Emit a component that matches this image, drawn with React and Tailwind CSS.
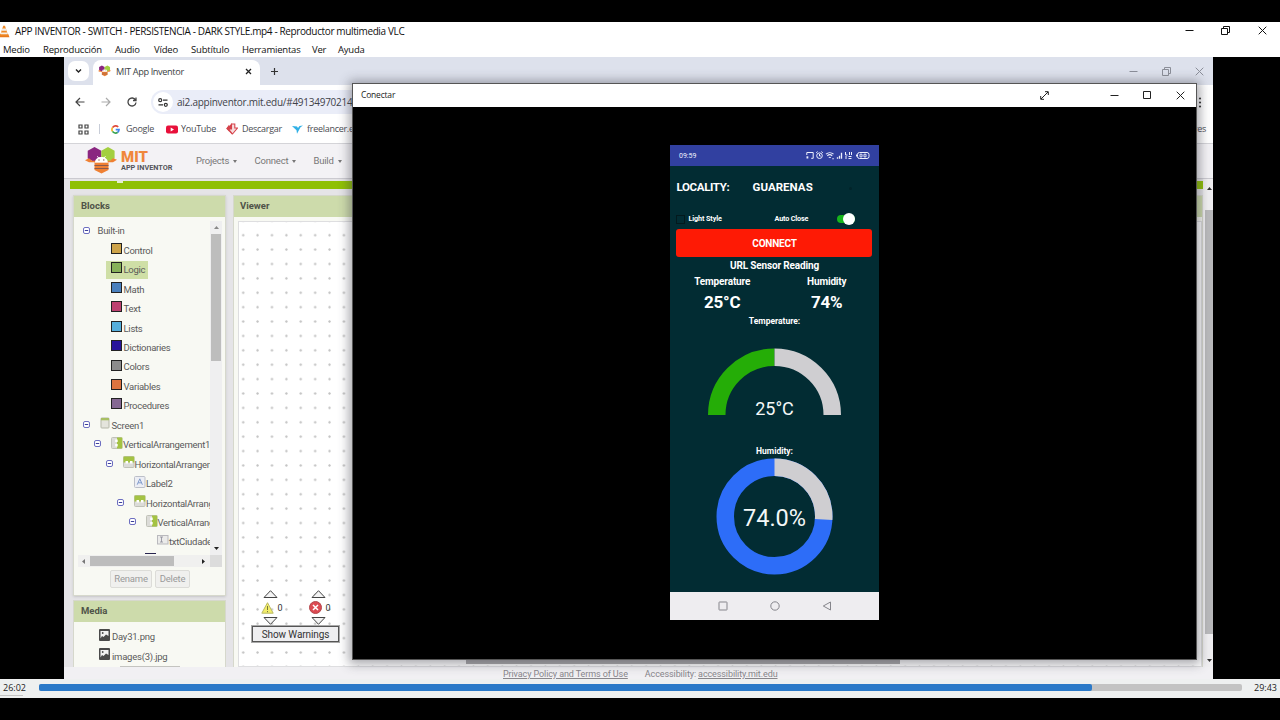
import { clsx } from 'clsx';

const menuItems = [
  { label: 'Medio', width: 'w-[40px]' },
  { label: 'Reproducción', width: 'w-[72px]' },
  { label: 'Audio', width: 'w-[39px]' },
  { label: 'Vídeo', width: 'w-[37px]' },
  { label: 'Subtítulo', width: 'w-[51px]' },
  { label: 'Herramientas', width: 'w-[70px]' },
  { label: 'Ver', width: 'w-[26px]' },
  { label: 'Ayuda', width: 'w-[30px]' },
];

const treeRows = [
  { label: 'Built-in', depth: 0, toggle: true },
  { label: 'Control', depth: 1, color: '#cda349' },
  { label: 'Logic', depth: 1, color: '#86b159', selected: true },
  { label: 'Math', depth: 1, color: '#4a80bd' },
  { label: 'Text', depth: 1, color: '#bc4170' },
  { label: 'Lists', depth: 1, color: '#55aedb' },
  { label: 'Dictionaries', depth: 1, color: '#28149a' },
  { label: 'Colors', depth: 1, color: '#8c8c8c' },
  { label: 'Variables', depth: 1, color: '#dd7440' },
  { label: 'Procedures', depth: 1, color: '#856892' },
  { label: 'Screen1', depth: 0, toggle: true, icon: 'screen' },
  { label: 'VerticalArrangement1', depth: 1, toggle: true, icon: 'vertical' },
  { label: 'HorizontalArrangement1', depth: 2, toggle: true, icon: 'horizontal' },
  { label: 'Label2', depth: 3, icon: 'label' },
  { label: 'HorizontalArrangement2', depth: 3, toggle: true, icon: 'horizontal' },
  { label: 'VerticalArrangement2', depth: 4, toggle: true, icon: 'vertical' },
  { label: 'txtCiudades', depth: 5, icon: 'textbox' },
];

function VlcCone() {
  return (
    <svg className="h-[13px] w-[10px] shrink-0" viewBox="0 0 10 13">
      <path d="M-1 9h9.200l1.300 3.200H-2z" fill="#e8791b" />
      <path d="M3.200 0.800h1.800l3.200 10H0z" fill="#f08a26" />
      <path d="M2.300 3.600h3.600l.8 2.200H1.600z" fill="#f4efe9" />
      <path d="M1 7.600h6.200l.6 1.600H.4z" fill="#f4efe9" />
    </svg>
  );
}

function Minimize({ className }) {
  return (
    <svg className={clsx('h-[11px] w-[11px]', className)} viewBox="0 0 11 11" fill="none" stroke="currentColor">
      <path d="M1.5 5.5h8" />
    </svg>
  );
}

function Restore({ className }) {
  return (
    <svg className={clsx('h-[11px] w-[11px]', className)} viewBox="0 0 11 11" fill="none" stroke="currentColor">
      <path d="M1.500 3.500h6v6h-6zM3.500 3.500v-2h6v6h-2" />
    </svg>
  );
}

function Cross({ className }) {
  return (
    <svg className={clsx('h-[11px] w-[11px]', className)} viewBox="0 0 11 11" fill="none" stroke="currentColor">
      <path d="M1.7 1.7l7.6 7.6M9.3 1.7L1.7 9.3" />
    </svg>
  );
}

function AppInventorLogo({ className }) {
  return (
    <svg className={className} viewBox="0 0 32 27">
      <path d="M9.5 0l6.8 3.7v7.8l-6.8 3.7-6.8-3.7V3.7z" fill="#8a2680" />
      <path d="M23 0l6.6 3.7v7.8L23 15.2l-6.7-3.7V3.7z" fill="#a3cf3f" />
      <path d="M0 13.3l4-2 3 2.500h18l3-2.500 4 1.500-4 2.400H4z" fill="#ef8033" />
      <path d="M9.500 15.500h14v7.500l-7 3.600-7-3.600z" fill="#ef8033" />
      <path d="M9.500 18.500h14M9.500 21.500h14" stroke="#8b5a4c" strokeWidth="1.1" />
      <path d="M10 15.500c0-3.400 2.800-5.400 6.400-5.400s6.400 2 6.400 5.400z" fill="#fff" />
      <path d="M12.300 9.200l1.500 2M20.500 9.200l-1.500 2" stroke="#fff" strokeWidth="0.9" />
      <circle cx="14" cy="13" r="0.7" fill="#8b5a4c" />
      <circle cx="18.8" cy="13" r="0.7" fill="#8b5a4c" />
    </svg>
  );
}

function BrowserTabs() {
  return (
    <div className="flex h-[28px] shrink-0 items-start bg-[#dde1ec] text-[#3c3f44]">
      <div className="mt-[4px] ml-[4px] flex h-[20px] w-[21px] items-center justify-center rounded-[7px] bg-white">
        <svg className="h-[6px] w-[7px]" viewBox="0 0 7 6" fill="none" stroke="#222" strokeWidth="1.4">
          <path d="M1 1.500l2.500 2.500L6 1.500" />
        </svg>
      </div>
      <div className="mt-[3px] ml-[4px] flex h-[25px] w-[167px] items-center rounded-t-[8px] bg-white pb-[2px] pl-[5px]">
        <AppInventorLogo className="mb-[2px] h-[12px] w-[13px]" />
        <span className="ml-[5px] w-[129px] font-['Open_Sans'] text-[9.2px] tracking-[-0.38px] whitespace-nowrap">MIT App Inventor</span>
        <svg className="h-[7px] w-[7px] shrink-0" viewBox="0 0 7 7" fill="none" stroke="#222" strokeWidth="1.3">
          <path d="M1 1l5 5M6 1L1 6" />
        </svg>
      </div>
      <svg className="mt-[10px] ml-[10px] h-[9px] w-[9px]" viewBox="0 0 9 9" fill="none" stroke="#333" strokeWidth="1.2">
        <path d="M4.500 1v7M1 4.500h7" />
      </svg>
      <div className="mt-[9px] mr-[8px] ml-auto flex gap-[22px] text-[#8b8e98]">
        <Minimize />
        <Restore />
        <Cross />
      </div>
    </div>
  );
}

function AddressBar() {
  return (
    <div className="flex h-[34px] shrink-0 items-center bg-white">
      <svg className="ml-[11px] h-[10px] w-[10px]" viewBox="0 0 10 10" fill="none" stroke="#444" strokeWidth="1.2">
        <path d="M9.500 5H1M5 1L1 5l4 4" />
      </svg>
      <svg className="ml-[16px] h-[10px] w-[10px]" viewBox="0 0 10 10" fill="none" stroke="#aaa" strokeWidth="1.2">
        <path d="M.5 5H9M5 1l4 4-4 4" />
      </svg>
      <svg className="ml-[16px] h-[10px] w-[10px]" viewBox="0 0 10 10" fill="none" stroke="#444" strokeWidth="1.3">
        <path d="M8.500 3A4 4 0 1 0 9 5.500M9 .5v3H6" />
      </svg>
      <div className="ml-[14px] flex h-[24px] w-[870px] items-center rounded-full bg-[#eaedf8] pl-[2px]">
        <div className="flex h-[20px] w-[20px] items-center justify-center rounded-full bg-white">
          <svg className="h-[9px] w-[10px]" viewBox="0 0 10 9" fill="none" stroke="#333" strokeWidth="1.2">
            <circle cx="2.2" cy="2.2" r="1.5" />
            <path d="M5 2.200h4.500M.5 6.800H5" />
            <circle cx="7.8" cy="6.8" r="1.5" />
          </svg>
        </div>
        <span className="ml-[4px] font-['Open_Sans'] text-[10px] tracking-[-0.26px] whitespace-nowrap text-[#3f4249]">
          ai2.appinventor.mit.edu/#49134970214
        </span>
      </div>
      <svg className="mr-[11px] ml-auto h-[11px] w-[4px]" viewBox="0 0 4 11" fill="#333">
        <circle cx="2" cy="1.5" r="1.1" />
        <circle cx="2" cy="5.5" r="1.1" />
        <circle cx="2" cy="9.5" r="1.1" />
      </svg>
    </div>
  );
}

function BookmarksBar() {
  return (
    <div className="flex h-[25px] shrink-0 items-center border-b border-[#d4d4d8] bg-white pb-[4px] font-['Open_Sans'] text-[9px] tracking-[-0.28px] text-[#4a4c52]">
      <svg className="ml-[14px] h-[11px] w-[11px] shrink-0" viewBox="0 0 11 11" fill="none" stroke="#444" strokeWidth="1.2">
        <path d="M1 1h3v3H1zM7 1h3v3H7zM1 7h3v3H1zM7 7h3v3H7z" />
      </svg>
      <div className="ml-[10px] h-[10px] w-px bg-[#c8cdd8]" />
      <svg className="ml-[11px] h-[9px] w-[9px] shrink-0" viewBox="0 0 9 9" fill="none" strokeWidth="1.7">
        <path d="M7.200 2A3.600 3.600 0 0 0 1.500 2.600" stroke="#e04a3a" />
        <path d="M1.500 2.600a3.600 3.600 0 0 0 0 3.800" stroke="#f2b72c" />
        <path d="M1.500 6.400a3.600 3.600 0 0 0 5.200.9" stroke="#38a350" />
        <path d="M6.700 7.300a3.600 3.600 0 0 0 1.300-2.600H4.700" stroke="#4284ec" />
      </svg>
      <span className="ml-[6px] w-[40px]">Google</span>
      <svg className="h-[9px] w-[12px] shrink-0" viewBox="0 0 12 9">
        <rect y="0.5" width="12" height="8" rx="2" fill="#e8103a" />
        <path d="M4.700 2.600v3.800L8 4.500z" fill="#fff" />
      </svg>
      <span className="ml-[3px] w-[45px]">YouTube</span>
      <svg className="h-[12px] w-[12px] shrink-0" viewBox="0 0 12 12">
        <path d="M6 .2L.3 5.500 6 11.600z" fill="#d5434b" />
        <path d="M5.500 1h3.300v4h2.700L6.500 11 2.500 6h3z" fill="#f6dcdd" stroke="#d5434b" strokeWidth="1.1" />
        <path d="M3 1.800L.3 5.500l3 3.200z" fill="#d5434b" />
      </svg>
      <span className="ml-[4px] w-[50px]">Descargar</span>
      <svg className="h-[9px] w-[11px] shrink-0" viewBox="0 0 11 9" fill="#2fb0e6">
        <path d="M0 1l5 .5L6 3l1.500-2 3.500-.4-2.500 1.600L5 8.700l-.5-3.500z" />
      </svg>
      <span className="ml-[4px]">freelancer.es</span>
      <span className="mr-[7px] ml-auto">Todos los marcadores</span>
    </div>
  );
}

function AppHeader() {
  const menus = [
    { label: 'Projects', width: 'w-[58.5px]' },
    { label: 'Connect', width: 'w-[59px]' },
    { label: 'Build', width: 'w-[40px]' },
  ];

  return (
    <div className="flex h-[35px] shrink-0 items-center border-b border-[#cbcad0] bg-[#f3f2f5]">
      <AppInventorLogo className="mb-[1px] ml-[21px] h-[27px] w-[32px]" />
      <div className="ml-[4px] flex w-[75px] flex-col font-['Roboto']">
        <span className="text-[15px] leading-[12px] font-black text-[#f0873c]">MIT</span>
        <span className="text-[7.3px] leading-[9px] font-bold whitespace-nowrap text-[#55555a]">APP INVENTOR</span>
      </div>
      {menus.map((menu) => (
        <div
          key={menu.label}
          className={clsx('flex items-center gap-[4px] font-["Roboto"] text-[9.5px] tracking-[-0.2px] text-[#777]', menu.width)}
        >
          {menu.label}
          <svg className="h-[3px] w-[4px]" viewBox="0 0 4 3" fill="#777">
            <path d="M0 0h4L2 3z" />
          </svg>
        </div>
      ))}
    </div>
  );
}

function Toggle() {
  return (
    <svg className="mb-[2px] h-[7px] w-[7px] shrink-0" viewBox="0 0 7 7" fill="#fff" stroke="#6d6fc0">
      <rect x="0.5" y="0.5" width="6" height="6" rx="1.5" />
      <path d="M1.800 3.500h3.400" stroke="#3d409a" />
    </svg>
  );
}

function ComponentIcon({ type }) {
  return (
    <svg className="mb-[4px] h-[12px] w-[12px] shrink-0" viewBox="0 0 12 12">
      {type === 'screen' ? (
        <>
          <rect x="1" y="1" width="8" height="10" rx="0.8" fill="#e4e4dc" stroke="#b5b7a8" />
          <path d="M1 1h8v2.300H1z" fill="#a8bf63" />
        </>
      ) : null}
      {type === 'vertical' ? (
        <>
          <rect x="0.5" y="0.5" width="10.5" height="11" rx="1" fill="#dcdcd8" stroke="#c0c2b8" />
          <path d="M6 .5h5.300v11H6z" fill="#a4c343" />
          <path d="M4.200 2.500h2.500v2.500H4.200zM4.200 7h2.500v2.500H4.200z" fill="#fff" />
        </>
      ) : null}
      {type === 'horizontal' ? (
        <>
          <rect x="0.5" y="0.5" width="10.5" height="11" rx="1" fill="#dcdcd8" stroke="#c0c2b8" />
          <path d="M.5.5h10.800v6H.5z" fill="#a4c343" />
          <path d="M2.500 5h2.500v2.500H2.500zM7 5h2.500v2.500H7z" fill="#fff" />
        </>
      ) : null}
      {type === 'label' ? (
        <>
          <rect x="0.5" y="0.5" width="10.5" height="11" rx="1" fill="#eceef4" stroke="#bcbfc8" />
          <path d="M3.200 8.700L5.800 2.800l2.600 5.900M4.200 6.800h3.200" fill="none" stroke="#7f9acb" />
        </>
      ) : null}
      {type === 'textbox' ? (
        <>
          <rect x="0.5" y="1.5" width="10.5" height="8.5" fill="#ebebea" stroke="#b9b9bd" />
          <path d="M3 3h3M4.500 3v5M3 8h3" fill="none" stroke="#8a8a98" strokeWidth="0.8" />
        </>
      ) : null}
    </svg>
  );
}

function TreeRow({ row }) {
  return (
    <div className="flex h-[19.45px] items-center" style={{ paddingLeft: 4.5 + row.depth * 11.5 }}>
      {row.toggle ? <Toggle /> : null}
      <div
        className={clsx(
          'flex h-[18px] items-center',
          !row.toggle && 'ml-[12px] pl-[5px]',
          row.toggle && row.icon && 'ml-[10px]',
          row.toggle && !row.icon && 'ml-[8px]',
          row.selected && 'bg-[#cfdfa6] pr-[3px]',
        )}
      >
        {row.color ? (
          <span className="mr-[2px] mb-[4px] h-[11px] w-[10.5px] shrink-0 border border-[#222]" style={{ background: row.color }} />
        ) : null}
        {row.icon ? <ComponentIcon type={row.icon} /> : null}
        <span className="pt-[1px] whitespace-nowrap">{row.label}</span>
      </div>
    </div>
  );
}

function BlocksPanel() {
  return (
    <div className="flex h-[401px] shrink-0 flex-col border border-[#d6d8cc] bg-[#f8f9f3] shadow-sm">
      <div className="flex h-[21px] shrink-0 items-center bg-[#cddbab] pl-[7px] text-[9.5px] font-bold text-[#4f5348]">Blocks</div>
      <div className="mt-[4px] ml-[4px] flex h-[334px] shrink-0">
        <div className="w-[132px] overflow-hidden pt-[0.3px] text-[9.5px] tracking-[-0.27px] text-[#5a5a5a]">
          {treeRows.map((row) => (
            <TreeRow key={row.label} row={row} />
          ))}
          <div className="mt-[1px] ml-[67px] h-[1.5px] w-[11px] bg-[#28244e]" />
        </div>
        <div className="flex w-[12px] flex-col items-center bg-[#efeff0]">
          <svg className="my-[5px] h-[3px] w-[5px] shrink-0" viewBox="0 0 5 3" fill="#888">
            <path d="M0 3h5L2.500 0z" />
          </svg>
          <div className="h-[127px] w-[10px] shrink-0 bg-[#bdbdbd]" />
          <svg className="mt-auto mb-[5px] h-[3px] w-[5px] shrink-0" viewBox="0 0 5 3" fill="#222">
            <path d="M0 0h5L2.500 3z" />
          </svg>
        </div>
      </div>
      <div className="ml-[4px] flex h-[12px] w-[144px] shrink-0 items-center bg-[#f0f0ef]">
        <svg className="ml-[4px] h-[5px] w-[3px]" viewBox="0 0 3 5" fill="#777">
          <path d="M3 0v5L0 2.500z" />
        </svg>
        <div className="ml-[5px] h-[10px] w-[84px] bg-[#bdbdbd]" />
        <svg className="ml-[28px] h-[5px] w-[3px]" viewBox="0 0 3 5" fill="#222">
          <path d="M0 0v5l3-2.500z" />
        </svg>
        <div className="ml-auto h-[12px] w-[12px] bg-[#dcdcdc]" />
      </div>
      <div className="mt-[3px] ml-[36px] flex gap-[3px] text-[9.5px] tracking-[-0.2px] text-[#9a9a9a]">
        <div className="flex h-[18px] w-[42px] items-center justify-center rounded-[2px] border border-[#dcdcd8] bg-[#f0f0ee]">Rename</div>
        <div className="flex h-[18px] w-[35px] items-center justify-center rounded-[2px] border border-[#dcdcd8] bg-[#f0f0ee]">Delete</div>
      </div>
    </div>
  );
}

function MediaPanel() {
  return (
    <div className="mt-[4px] flex h-[67px] shrink-0 flex-col overflow-hidden border border-b-0 border-[#d6d8cc] bg-[#f8f9f3]">
      <div className="flex h-[21px] shrink-0 items-center bg-[#cddbab] pl-[7px] text-[9.5px] font-bold text-[#4f5348]">Media</div>
      <div className="mt-[5px] ml-[25px] shrink-0 text-[9.5px] tracking-[-0.23px] text-[#5a5a5a]">
        {['Day31.png', 'images(3).jpg'].map((file) => (
          <div key={file} className="flex h-[19.5px] items-center">
            <svg className="mr-[2px] mb-[4px] h-[12px] w-[11px]" viewBox="0 0 11 12">
              <rect width="11" height="12" rx="1" fill="#4a4a4a" />
              <path d="M1.500 9.500V2h8v5L7 5.500 4.500 8 3 7z" fill="#f2f2f2" />
              <circle cx="3.7" cy="4" r="0.9" fill="#4a4a4a" />
            </svg>
            <span className="pt-[1px]">{file}</span>
          </div>
        ))}
      </div>
      <div className="ml-[46px] h-px w-[60px] shrink-0 bg-[#c4c4c0]" />
    </div>
  );
}

function WarningCounter({ type }) {
  return (
    <div className="flex w-[21px] flex-col items-center text-[9px] text-[#333]">
      <svg className="h-[8px] w-[15px]" viewBox="0 0 15 8" fill="#f4f4f4" stroke="#444">
        <path d="M1 7.500h13L7.500.7z" />
      </svg>
      <div className="my-[3px] ml-[4px] flex h-[13px] items-center gap-[3px]">
        {type === 'warning' ? (
          <svg className="h-[12px] w-[13px]" viewBox="0 0 13 12">
            <path d="M6.500.7l5.700 10.500H.8z" fill="#f3ee6a" stroke="#b9b864" />
            <path d="M6.500 4v4M6.500 9v1.200" stroke="#77763c" />
          </svg>
        ) : (
          <svg className="h-[13px] w-[13px]" viewBox="0 0 13 13">
            <circle cx="6.5" cy="6.5" r="6" fill="#dc4a52" stroke="#b4474c" />
            <path d="M4 4l5 5M9 4L4 9" stroke="#fff" strokeWidth="1.5" />
          </svg>
        )}
        <span className="pt-[2px]">0</span>
      </div>
      <svg className="h-[8px] w-[15px]" viewBox="0 0 15 8" fill="#f4f4f4" stroke="#444">
        <path d="M1 .5h13L7.500 7.300z" />
      </svg>
    </div>
  );
}

function Viewer() {
  return (
    <div className="mt-[6px] ml-[7px] flex flex-1 flex-col border border-b-0 border-[#d6d8cc] bg-[#f8f9f3]">
      <div className="flex h-[21px] shrink-0 items-center bg-[#cddbab] pl-[6px] text-[9.5px] font-bold text-[#4f5348]">Viewer</div>
      <div className="mt-[4px] ml-[4px] flex flex-1 flex-col justify-end border border-[#dedee0] bg-white bg-[radial-gradient(circle,#c2c2c2_0.8px,transparent_1.5px)] bg-size-[14.4px_14.4px] bg-position-[-3px_6px] pb-[24px] pl-[13px]">
        <div className="mb-[1px] flex gap-[27px] pl-[7.5px]">
          <WarningCounter type="warning" />
          <WarningCounter type="error" />
        </div>
        <div className="flex h-[16px] w-[87px] items-center justify-center border border-[#555] bg-[#eeeef0] text-[10px] tracking-[-0.1px] text-[#333] outline outline-[#aaa]">
          Show Warnings
        </div>
      </div>
    </div>
  );
}

function Workspace() {
  return (
    <div className="flex h-[488px] shrink-0 bg-[#e5e4e7] font-['Roboto']">
      <div className="flex w-[1139px] flex-col pl-[6px]">
        <div className="mt-[2px] flex h-[8px] shrink-0 bg-[#8fc005]">
          <div className="ml-[47px] h-[2px] w-[6px] bg-[#e5f0cc]" />
        </div>
        <div className="flex min-h-0 flex-1">
          <div className="mt-[6px] ml-[3px] flex w-[153px] flex-col">
            <BlocksPanel />
            <MediaPanel />
          </div>
          <Viewer />
        </div>
      </div>
      <div className="flex flex-1 flex-col items-end bg-[#f0eff1]">
        <svg className="mt-[8px] mr-[1px] h-[3px] w-[5px]" viewBox="0 0 5 3" fill="#333">
          <path d="M0 3h5L2.500 0z" />
        </svg>
        <div className="mt-[20px] h-[424px] w-[8px] bg-[#b9b9bb]" />
        <svg className="mt-auto mr-[1px] mb-[5px] h-[3px] w-[5px]" viewBox="0 0 5 3" fill="#333">
          <path d="M0 0h5L2.500 3z" />
        </svg>
      </div>
    </div>
  );
}

function StatusIcons() {
  return (
    <svg className="h-[9px] w-[64px]" viewBox="0 0 64 9" fill="none" stroke="#eef0fc">
      <path d="M.8 4V1.500h6.400V7.300H5.200" />
      <path d="M.5 5.300h1.800v2.200H.5z" fill="#eef0fc" stroke="none" />
      <path d="M10.200 1.700l1.500-1.100M16.800 1.700l-1.500-1.100M13.500 3v2h1.300" />
      <circle cx="13.5" cy="4.7" r="2.8" />
      <path d="M20 3.200a5.500 5.500 0 0 1 7.500 0M21.300 4.900a3.500 3.500 0 0 1 4.900 0M22.800 6.700a1.500 1.500 0 0 1 2 0M26.300 7.700h1.500" strokeWidth="1.1" />
      <path d="M31.500 7.700V6.200M33.500 7.700V4.700M35.500 7.700V1.700" strokeWidth="1.3" />
      <path d="M39.500 1v3h2M43.500 1v3M45.500 1v3M40 5v3M42.500 5.500h3M42.500 7.500h3" />
      <rect x="51.500" y="1.500" width="11.500" height="6" rx="2" />
      <path d="M50.500 3.500v2" />
      <path d="M54 3.200v2.700h2V3.200zM58 3.200v2.700h2V3.200z" strokeWidth="0.9" />
    </svg>
  );
}

function Phone() {
  return (
    <div className="mt-[38px] ml-[317px] flex h-[475px] w-[209px] flex-col bg-[#022c33] font-['Roboto'] text-white">
      <div className="flex h-[21px] shrink-0 items-center justify-between bg-[#3140a0] pr-[9px] pl-[9px] text-[7px] text-[#f0f2fc]">
        <span className="pt-[1px]">09:59</span>
        <StatusIcons />
      </div>
      <div className="flex h-[43px] shrink-0 items-center pt-[1px] pl-[6.5px] font-bold">
        <span className="w-[76px] text-[11.5px] tracking-[-0.35px]">LOCALITY:</span>
        <span className="w-[96px] text-[11.5px] tracking-[0.05px]">GUARENAS</span>
        <span className="h-[3px] w-[3px] rounded-full bg-[#02242a]" />
      </div>
      <div className="flex h-[20px] shrink-0 items-center pl-[5.5px] text-[7.2px] font-bold">
        <span className="mr-[4px] h-[9px] w-[9px] border border-[#03191d]" />
        <span className="w-[86px] tracking-[-0.1px]">Light Style</span>
        <span className="w-[62.5px] tracking-[-0.15px]">Auto Close</span>
        <div className="flex h-[8px] w-[18px] items-center justify-end rounded-full bg-[#17b51c]">
          <div className="h-[12px] w-[12px] shrink-0 rounded-full bg-white" />
        </div>
      </div>
      <div className="mr-[7px] ml-[6px] flex h-[28px] shrink-0 items-center justify-center rounded-[3px] bg-[#fe1a05] pl-[1px] text-[10px] font-bold tracking-[-0.2px]">
        CONNECT
      </div>
      <div className="flex h-[16px] shrink-0 items-center justify-center text-[10px] font-bold tracking-[-0.15px]">URL Sensor Reading</div>
      <div className="grid h-[16px] shrink-0 grid-cols-2 items-center text-center text-[10px] font-bold tracking-[-0.15px]">
        <span>Temperature</span>
        <span>Humidity</span>
      </div>
      <div className="grid h-[26px] shrink-0 grid-cols-2 items-center pt-[1px] text-center text-[17px] font-bold tracking-[-0.2px]">
        <span>25°C</span>
        <span>74%</span>
      </div>
      <div className="flex h-[13px] shrink-0 items-center justify-center text-[8.5px] font-bold">Temperature:</div>
      <svg className="h-[118px] w-[209px] shrink-0" viewBox="0 0 209 118" fill="none" strokeWidth="17.5">
        <path d="M46.750 87A57.750 57.750 0 0 1 104.500 29.250" stroke="#25ad07" />
        <path d="M104.500 29.250A57.750 57.750 0 0 1 162.250 87" stroke="#cfced1" />
        <text x="104.5" y="87" textAnchor="middle" fontSize="18" fill="#f4f8f8" stroke="none">
          25°C
        </text>
      </svg>
      <div className="flex h-[11px] shrink-0 items-center justify-center text-[8.5px] font-bold">Humidity:</div>
      <svg className="h-[135px] w-[209px] shrink-0" viewBox="0 0 209 135" fill="none" strokeWidth="17.5">
        <circle cx="104.5" cy="59.5" r="49.25" stroke="#2d6df8" />
        <circle
          cx="104.5"
          cy="59.5"
          r="49.25"
          stroke="#cfced1"
          pathLength="100"
          strokeDasharray="26 74"
          transform="rotate(-90 104.5 59.5)"
        />
        <text x="104.5" y="69" textAnchor="middle" fontSize="23.5" fill="#f4f8f8" stroke="none">
          74.0%
        </text>
      </svg>
      <div className="flex flex-1 items-center justify-center gap-[42px] bg-[#eeedf0] text-[#85858b]">
        <svg className="h-[10px] w-[10px]" viewBox="0 0 10 10" fill="none" stroke="currentColor">
          <rect x="1" y="1" width="8" height="8" rx="0.5" />
        </svg>
        <svg className="h-[10px] w-[10px]" viewBox="0 0 10 10" fill="none" stroke="currentColor">
          <circle cx="5" cy="5" r="4.2" />
        </svg>
        <svg className="h-[10px] w-[10px]" viewBox="0 0 10 10" fill="none" stroke="currentColor">
          <path d="M8.500 1v8L1.300 5z" strokeLinejoin="round" />
        </svg>
      </div>
    </div>
  );
}

function ConectarWindow() {
  return (
    <div className="absolute top-[26px] left-[288px] flex h-[577px] w-[845px] flex-col border border-[#555] bg-black shadow-[0_1px_10px_3px_rgba(60,60,70,0.45)]">
      <div className="flex h-[23px] shrink-0 items-center bg-white pl-[8px] font-['Open_Sans'] text-[8.5px] tracking-[-0.2px] text-[#222]">
        Conectar
        <div className="mr-[10px] ml-auto flex items-center text-[#222]">
          <svg className="mr-[59px] h-[11px] w-[11px]" viewBox="0 0 11 11" fill="none" stroke="currentColor">
            <path d="M2 9l7-7M6 1.700h3.300V5M1.700 6v3.300H5" />
          </svg>
          <Minimize className="mr-[22px]" />
          <svg className="mr-[22px] h-[11px] w-[11px]" viewBox="0 0 11 11" fill="none" stroke="currentColor">
            <path d="M1.500 1.500h7v7h-7z" />
          </svg>
          <Cross />
        </div>
      </div>
      <Phone />
    </div>
  );
}

function Browser() {
  return (
    <div className="relative ml-[64px] flex h-[622px] w-[1149px] shrink-0 flex-col overflow-hidden bg-[#f1f0f3]">
      <BrowserTabs />
      <AddressBar />
      <BookmarksBar />
      <AppHeader />
      <Workspace />
      <div className="flex flex-1 items-center gap-[17px] pt-[2px] pl-[439px] font-['Roboto'] text-[9px] leading-[10px] tracking-[-0.1px] whitespace-nowrap text-[#88868b]">
        <span className="underline decoration-1 underline-offset-1">Privacy Policy and Terms of Use</span>
        <span>
          Accessibility: <span className="underline decoration-1 underline-offset-1">accessibility.mit.edu</span>
        </span>
      </div>
      <div className="absolute top-[602px] left-[402px] h-[5px] w-[434px] bg-[#a9a8aa]" />
      <ConectarWindow />
    </div>
  );
}

export default function App() {
  return (
    <div className="flex h-[720px] w-[1280px] flex-col overflow-hidden bg-black pt-[22px]">
      <div className="flex h-[18px] shrink-0 items-center bg-white font-['Open_Sans'] text-[10px] tracking-[-0.37px] text-[#111]">
        <VlcCone />
        <span className="ml-[5px] pt-[1px] whitespace-nowrap">
          APP INVENTOR - SWITCH - PERSISTENCIA - DARK STYLE.mp4 - Reproductor multimedia VLC
        </span>
        <div className="mr-[12.5px] mb-[2px] ml-auto flex gap-[25.5px] text-[#111]">
          <Minimize />
          <Restore />
          <Cross />
        </div>
      </div>
      <div className="flex h-[17px] shrink-0 items-center bg-white pt-[1px] pl-[3px] font-['Open_Sans'] text-[9.5px] leading-[13px] tracking-[-0.2px] text-[#111]">
        {menuItems.map((item) => (
          <span key={item.label} className={item.width}>
            {item.label}
          </span>
        ))}
      </div>
      <Browser />
      <div className="flex h-[19px] shrink-0 flex-col bg-[#eef0f0] font-['Open_Sans'] text-[9px] text-[#222]">
        <div className="flex h-[16px] items-center pl-[3px]">
          <span className="w-[36px] pt-[1px]">26:02</span>
          <div className="h-[7px] w-[1203px] overflow-hidden rounded-[2px] bg-[#c3c3c3]">
            <div className="h-full rounded-r-[2px] bg-[#2b79c8]" style={{ width: 1053 }} />
          </div>
          <span className="ml-[12px] pt-[1px]">29:43</span>
        </div>
        <div className="h-px w-[23px] bg-[#c4c4c4]" />
      </div>
    </div>
  );
}
